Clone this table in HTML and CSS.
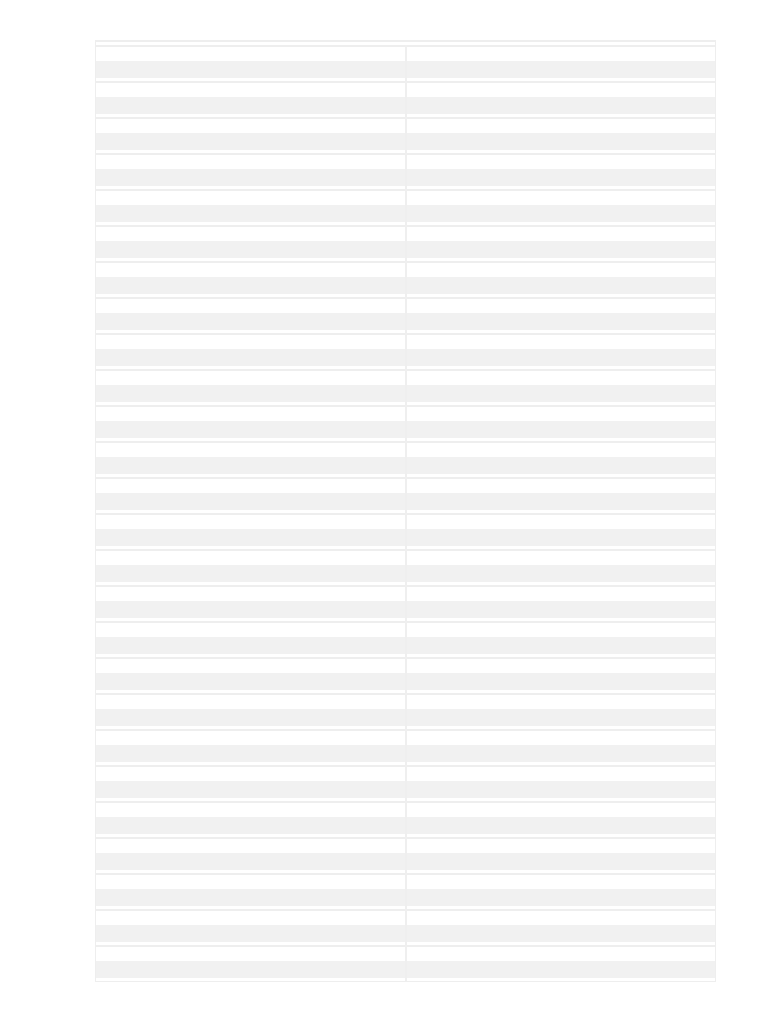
FILE: index.html
```html
<!DOCTYPE html>
<html>
<head>
<meta charset="utf-8">
<link rel="stylesheet" href="styles.css">
</head>
<body>
<div class="page">
  <div class="table" id="t"></div>
</div>
<script>
  var t = document.getElementById('t');
  var html = '';
  for (var i = 0; i < 26; i++) {
    html += '<div class="group"><div class="cell"><div class="line"></div><div class="white"></div><div class="gray"></div></div><div class="cell"><div class="line"></div><div class="white"></div><div class="gray"></div></div></div>';
  }
  t.innerHTML = html;
</script>
</body>
</html>
```
FILE: styles.css
```css
html, body {
  margin: 0;
  padding: 0;
  background: #ffffff;
  font-family: "Liberation Sans", Arial, sans-serif;
}
.page {
  padding: 40px 0 0 95px;
}
.table {
  width: 619px;
  border: 1px solid #eeeeee;
  border-top-width: 2px;
  padding-top: 3px;
  background: #ffffff;
}
.group {
  display: grid;
  grid-template-columns: 309px 1fr;
  column-gap: 2px;
  background: #efefef;
  height: 36px;
}
.cell {
  background: #ffffff;
  display: flex;
  flex-direction: column;
}
.line {
  height: 2px;
  background: #eeeeee;
}
.white {
  height: 14px;
  background: #ffffff;
}
.gray {
  height: 17px;
  background: #f1f1f1;
}
```
